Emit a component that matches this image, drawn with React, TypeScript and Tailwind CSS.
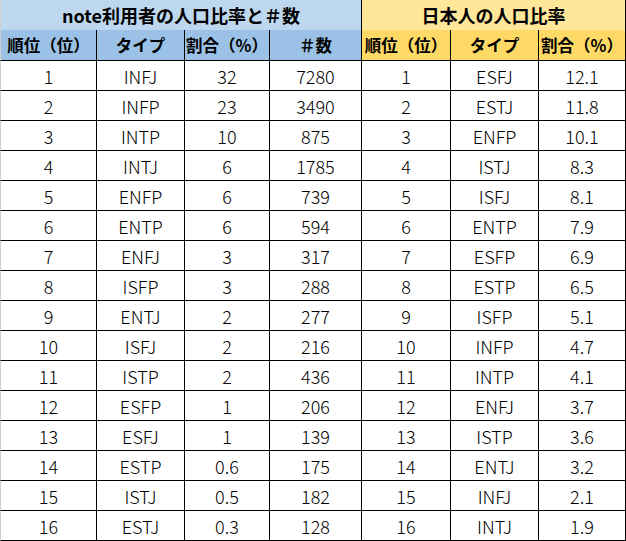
import React from "react";

const left: [string, string, string, string][] = [
  ["1", "INFJ", "32", "7280"],
  ["2", "INFP", "23", "3490"],
  ["3", "INTP", "10", "875"],
  ["4", "INTJ", "6", "1785"],
  ["5", "ENFP", "6", "739"],
  ["6", "ENTP", "6", "594"],
  ["7", "ENFJ", "3", "317"],
  ["8", "ISFP", "3", "288"],
  ["9", "ENTJ", "2", "277"],
  ["10", "ISFJ", "2", "216"],
  ["11", "ISTP", "2", "436"],
  ["12", "ESFP", "1", "206"],
  ["13", "ESFJ", "1", "139"],
  ["14", "ESTP", "0.6", "175"],
  ["15", "ISTJ", "0.5", "182"],
  ["16", "ESTJ", "0.3", "128"],
];

const right: [string, string, string][] = [
  ["1", "ESFJ", "12.1"],
  ["2", "ESTJ", "11.8"],
  ["3", "ENFP", "10.1"],
  ["4", "ISTJ", "8.3"],
  ["5", "ISFJ", "8.1"],
  ["6", "ENTP", "7.9"],
  ["7", "ESFP", "6.9"],
  ["8", "ESTP", "6.5"],
  ["9", "ISFP", "5.1"],
  ["10", "INFP", "4.7"],
  ["11", "INTP", "4.1"],
  ["12", "ENFJ", "3.7"],
  ["13", "ISTP", "3.6"],
  ["14", "ENTJ", "3.2"],
  ["15", "INFJ", "2.1"],
  ["16", "INTJ", "1.9"],
];

function Cell({ children, first }: { children: React.ReactNode; first?: boolean }) {
  return (
    <div
      className={
        "h-[30px] flex items-center justify-center border-r border-b border-black bg-white text-[18px] font-light text-black " +
        (first ? "border-l border-l-[#d0d0d0]" : "")
      }
    >
      {children}
    </div>
  );
}

function Head({ children, blue, first }: { children: React.ReactNode; blue?: boolean; first?: boolean }) {
  return (
    <div
      className={
        "h-[31px] flex items-center justify-center border-r border-b border-black font-bold text-[16.5px] text-black whitespace-nowrap overflow-visible " +
        (blue ? "bg-[#9BC2E6] " : "bg-[#FFD966] ") +
        (first ? "border-l border-l-[#d0d0d0]" : "")
      }
    >
      {children}
    </div>
  );
}

export default function App() {
  return (
    <div className="w-[626px] h-[541px] bg-white font-['Noto_Sans_CJK_JP','Noto_Sans',sans-serif] leading-none">
      <div className="grid grid-cols-[97px_88px_85px_92px_89px_88px_87px]">
        <div className="col-span-4 h-[30px] flex items-center justify-center bg-[#BDD7EE] border-r border-black border-l border-l-[#d0d0d0] font-bold text-[18px] text-black">
          note利用者の人口比率と＃数
        </div>
        <div className="col-span-3 h-[30px] flex items-center justify-center bg-[#FFE699] border-r border-black font-bold text-[18px] text-black">
          日本人の人口比率
        </div>

        <Head blue first>順位（位）</Head>
        <Head blue>タイプ</Head>
        <Head blue>割合（%）</Head>
        <Head blue>＃数</Head>
        <Head>順位（位）</Head>
        <Head>タイプ</Head>
        <Head>割合（%）</Head>

        {left.map((row, i) => (
          <React.Fragment key={i}>
            <Cell first>{row[0]}</Cell>
            <Cell>{row[1]}</Cell>
            <Cell>{row[2]}</Cell>
            <Cell>{row[3]}</Cell>
            <Cell>{right[i][0]}</Cell>
            <Cell>{right[i][1]}</Cell>
            <Cell>{right[i][2]}</Cell>
          </React.Fragment>
        ))}
      </div>
    </div>
  );
}
